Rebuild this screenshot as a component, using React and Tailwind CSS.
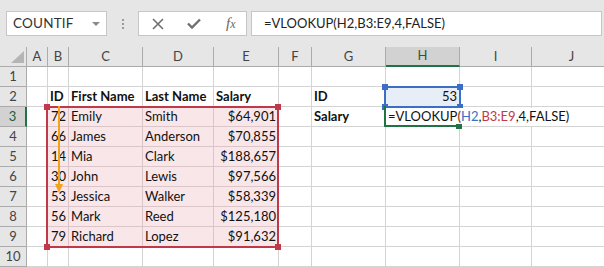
import React from "react";

const gridLine = "border-[#d4d4d4]";

// column widths incl. right gridline
const columns = [
  { key: "A", w: "w-[21px]" },
  { key: "B", w: "w-[21px]" },
  { key: "C", w: "w-[74px]" },
  { key: "D", w: "w-[71px]" },
  { key: "E", w: "w-[65px]" },
  { key: "F", w: "w-[33px]" },
  { key: "G", w: "w-[74px]" },
  { key: "H", w: "w-[74px]" },
  { key: "I", w: "w-[72px]" },
  { key: "J", w: "w-[80px]" },
];

const people = [
  ["72", "Emily", "Smith", "$64,901"],
  ["66", "James", "Anderson", "$70,855"],
  ["14", "Mia", "Clark", "$188,657"],
  ["30", "John", "Lewis", "$97,566"],
  ["53", "Jessica", "Walker", "$58,339"],
  ["56", "Mark", "Reed", "$125,180"],
  ["79", "Richard", "Lopez", "$91,632"],
];

// builds the cell contents for a row number
const cellsFor = (row) => {
  const cells = {};
  if (row === 2) {
    cells.B = { text: "ID", bold: true };
    cells.C = { text: "First Name", bold: true };
    cells.D = { text: "Last Name", bold: true };
    cells.E = { text: "Salary", bold: true };
    cells.G = { text: "ID", bold: true };
    cells.H = { text: "53", right: true, fill: "blue" };
  }
  if (row === 3) {
    cells.G = { text: "Salary", bold: true };
  }
  if (row >= 3 && row <= 9) {
    const p = people[row - 3];
    cells.B = { text: p[0], right: true, fill: "pink" };
    cells.C = { text: p[1], fill: "pink" };
    cells.D = { text: p[2], fill: "pink" };
    cells.E = { text: p[3], right: true, fill: "pink" };
  }
  return cells;
};

const Cell = ({ col, cell }) => {
  const fill =
    cell?.fill === "pink"
      ? "bg-[#f9e6e8] border-[#dcc5c8]"
      : cell?.fill === "blue"
      ? "bg-[#e8eef8]"
      : "";
  return (
    <div
      className={`${col.w} shrink-0 h-full border-r border-b ${gridLine} ${fill} flex items-center px-[2px] whitespace-nowrap ${
        cell?.right ? "justify-end" : "justify-start"
      } ${cell?.bold ? "font-bold" : ""}`}
    >
      {cell?.text}
    </div>
  );
};

const Toolbar = () => (
  <div className="h-[47px] bg-[#e6e6e6] flex items-start pt-[11px]">
    {/* Name box */}
    <div className="ml-[6px] w-[101px] h-[25px] bg-white border border-[#c6c6c6] flex items-center pl-[6px] pr-[6px] justify-between">
      <span className="text-[13.5px] text-[#333] tracking-[0.2px]">COUNTIF</span>
      <span className="w-0 h-0 border-l-[4px] border-r-[4px] border-t-[4px] border-l-transparent border-r-transparent border-t-[#8a8a8a]" />
    </div>

    <div className="w-[31px] h-[25px] flex flex-col items-center justify-center gap-[2px]">
      <span className="w-[2px] h-[2px] bg-[#9a9a9a]" />
      <span className="w-[2px] h-[2px] bg-[#9a9a9a]" />
      <span className="w-[2px] h-[2px] bg-[#9a9a9a]" />
    </div>

    {/* Cancel / enter / function */}
    <div className="w-[109px] h-[25px] bg-white border border-[#c6c6c6] flex items-center">
      <svg width="12" height="12" viewBox="0 0 12 12" className="ml-[13px]">
        <path d="M1 1 L11 11 M11 1 L1 11" stroke="#6f6f6f" strokeWidth="1.6" />
      </svg>
      <svg width="14" height="11" viewBox="0 0 14 11" className="ml-[23px]">
        <path d="M1 5.5 L5 9.5 L13 1.5" stroke="#6f6f6f" strokeWidth="2.4" fill="none" />
      </svg>
      <span className="ml-[25px] font-['Liberation_Serif',serif] italic text-[15px] text-[#666] leading-none">
        f<span className="text-[12px]">x</span>
      </span>
    </div>

    {/* Formula input */}
    <div className="ml-[4px] w-[351px] h-[25px] bg-white border border-[#c6c6c6] flex items-center pl-[12px]">
      <span className="text-[13px] text-[#222]">=VLOOKUP(H2,B3:E9,4,FALSE)</span>
    </div>
  </div>
);

const HeaderRow = () => (
  <div className="h-[20px] flex bg-[#e6e6e6]">
    <div className="w-[27px] shrink-0 h-full border-r border-b border-[#ababab] relative">
      <svg width="13" height="12" className="absolute right-[2px] bottom-[3px]">
        <polygon points="13,0 13,12 0,12" fill="#b5b5b5" />
      </svg>
    </div>
    {columns.map((c) =>
      c.key === "H" ? (
        <div
          key={c.key}
          className={`${c.w} shrink-0 h-full bg-[#d2d2d2] border-r border-[#ababab] border-b-2 border-b-[#217346] flex items-center justify-center text-[#1f5c3a]`}
        >
          {c.key}
        </div>
      ) : (
        <div
          key={c.key}
          className={`${c.w} shrink-0 h-full border-r border-b border-[#ababab] flex items-center justify-center text-[#444]`}
        >
          {c.key}
        </div>
      )
    )}
  </div>
);

const DataRow = ({ row }) => {
  const cells = cellsFor(row);
  const active = row === 3;
  return (
    <div className="h-5 flex">
      <div
        className={`w-[27px] shrink-0 h-full flex items-center justify-center border-b border-[#ababab] ${
          active
            ? "bg-[#d2d2d2] border-r-2 border-r-[#217346] text-[#1f5c3a]"
            : "bg-[#e6e6e6] border-r text-[#444]"
        }`}
      >
        {row}
      </div>
      {columns.map((c) => (
        <Cell key={c.key} col={c} cell={cells[c.key]} />
      ))}
    </div>
  );
};

export default function App() {
  const rows = [1, 2, 3, 4, 5, 6, 7, 8, 9, 10];

  return (
    <div className="relative w-[604px] h-[267px] overflow-hidden bg-white font-['Lato',sans-serif] text-[13px] text-[#111]">
      <Toolbar />
      <HeaderRow />
      {rows.map((r) => (
        <DataRow key={r} row={r} />
      ))}

      {/* Table range B3:E9 */}
      <div className="absolute left-[46px] top-[106px] w-[233px] h-[142px] border-2 border-[#c0394a]" />
      <div className="absolute left-[44px] top-[104px] w-[6px] h-[6px] bg-[#c0394a]" />
      <div className="absolute left-[275px] top-[104px] w-[6px] h-[6px] bg-[#c0394a]" />
      <div className="absolute left-[44px] top-[244px] w-[6px] h-[6px] bg-[#c0394a]" />
      <div className="absolute left-[275px] top-[244px] w-[6px] h-[6px] bg-[#c0394a]" />

      {/* Lookup arrow */}
      <svg width="10" height="90" className="absolute left-[54px] top-[106px]">
        <line x1="5" y1="0" x2="5" y2="80" stroke="#f5a21b" strokeWidth="2" />
        <polygon points="1,78 9,78 5,87" fill="#f5a21b" />
      </svg>

      {/* Lookup value H2 */}
      <div className="absolute left-[384px] top-[86px] w-[77px] h-[22px] border-2 border-[#3b6fc5]" />
      <div className="absolute left-[382px] top-[84px] w-[6px] h-[6px] bg-[#3b6fc5]" />
      <div className="absolute left-[457px] top-[84px] w-[6px] h-[6px] bg-[#3b6fc5]" />
      <div className="absolute left-[382px] top-[104px] w-[6px] h-[6px] bg-[#3b6fc5]" />
      <div className="absolute left-[457px] top-[104px] w-[6px] h-[6px] bg-[#3b6fc5]" />

      {/* Cell being edited: H3 */}
      <div className="absolute left-[386px] top-[108px] w-[183px] h-[18px] bg-white flex items-center whitespace-nowrap pl-[2px]">
        <span>=VLOOKUP</span>
        <span className="text-[#a0561c] font-bold">(</span>
        <span className="text-[#3b6fc5]">H2</span>
        <span>,</span>
        <span className="text-[#c0394a]">B3:E9</span>
        <span>,4,FALSE)</span>
        <span className="ml-[3px] w-px h-[18px] bg-[#333]" />
      </div>
      <div className="absolute left-[384px] top-[106px] w-[2px] h-[21px] bg-[#217346]" />
      <div className="absolute left-[384px] top-[125px] w-[78px] h-[2px] bg-[#217346]" />
      <div className="absolute left-[456px] top-[124px] w-[6px] h-[5px] bg-[#217346]" />
    </div>
  );
}
